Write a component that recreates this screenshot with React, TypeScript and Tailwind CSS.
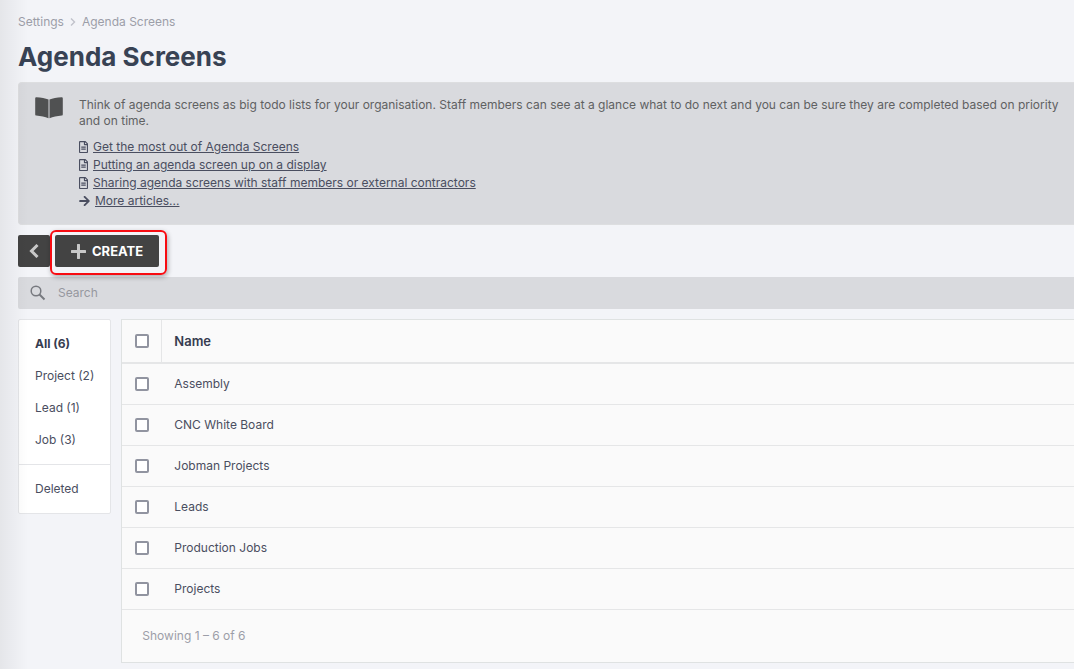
import { useState } from 'react';
import { FaArrowRight, FaRegFileAlt } from 'react-icons/fa';

const articles = [
  'Get the most out of Agenda Screens',
  'Putting an agenda screen up on a display',
  'Sharing agenda screens with staff members or external contractors',
];

const filters = ['All (6)', 'Project (2)', 'Lead (1)', 'Job (3)'];

const screens = ['Assembly', 'CNC White Board', 'Jobman Projects', 'Leads', 'Production Jobs', 'Projects'];

const checkbox =
  'block size-3.5 appearance-none rounded-xs border-2 border-[#9194a0] bg-white checked:bg-[#9194a0]';

function BookIcon() {
  return (
    <svg viewBox="0 0 28 22" className="h-[22px] w-7 shrink-0 fill-[#505152]" aria-hidden="true">
      <path d="M.2 1.400C.2.600.7.2 1.400.2 6 .4 10.500 1.200 13.500 2.600V21.300C10 20 6 19 1.200 18.600.6 18.500.2 18 .2 17.300Z" />
      <path d="M27.800 1.400C27.800.600 27.300.2 26.600.2 22 .4 17.500 1.200 14.500 2.600V21.300C18 20 22 19 26.800 18.600 27.400 18.500 27.800 18 27.800 17.300Z" />
    </svg>
  );
}

function HelpPanel() {
  return (
    <section className="flex gap-4 rounded-l-sm border border-r-0 border-[#dddee0] bg-[#d9dade] py-3.5 pl-4">
      <BookIcon />
      <div className="pr-3">
        <p className="text-[#606162]">
          Think of agenda screens as big todo lists for your organisation. Staff members can see at a glance what to do
          next and you can be sure they are completed based on priority and on time.
        </p>
        <ul className="mt-[9px] leading-[18px]">
          {articles.map((title) => (
            <li key={title} className="flex items-center gap-[5px]">
              <FaRegFileAlt className="h-3 w-[9px]" />
              <a href="#" className="underline">{title}</a>
            </li>
          ))}
          <li className="flex items-center gap-[5px]">
            <FaArrowRight className="h-3 w-[11px]" />
            <a href="#" className="underline">More articles...</a>
          </li>
        </ul>
      </div>
    </section>
  );
}

function FilterMenu() {
  const [active, setActive] = useState(filters[0]);

  const item = (label: string) => (
    <button
      key={label}
      onClick={() => setActive(label)}
      className={`block h-8 w-full px-4 text-left whitespace-nowrap ${active === label ? 'font-bold text-[#363c50]' : ''}`}
    >
      {label}
    </button>
  );

  return (
    <nav className="shrink-0 rounded-xs border border-[#e4e5e8] bg-white">
      <div className="border-b border-[#e4e5e8] py-2">{filters.map(item)}</div>
      <div className="py-2">{item('Deleted')}</div>
    </nav>
  );
}

export default function App() {
  const [selected, setSelected] = useState<string[]>([]);

  const toggle = (name: string) =>
    setSelected(selected.includes(name) ? selected.filter((s) => s !== name) : [...selected, name]);

  return (
    <main className="relative min-h-screen bg-[#f3f4f8] pt-3.5 pb-1.5 pl-[18px] font-['Inter',sans-serif] text-[12px] leading-4 text-[#4a4e60]">
      <div className="pointer-events-none absolute inset-y-0 left-0 w-7 bg-linear-to-r from-black/6 to-transparent" />

      <nav className="flex items-center gap-1.5 text-[#9c9ea8]">
        <a href="#">Settings</a>
        <svg viewBox="0 0 6 8" className="h-2 w-1.5 fill-none stroke-[#c0c2cb]" aria-hidden="true">
          <path d="M1 .5 4.500 4 1 7.500" strokeWidth="1.4" />
        </svg>
        <a href="#">Agenda Screens</a>
      </nav>

      <h1 className="mt-[11px] mb-[9px] text-[26px] leading-8 font-bold text-[#384254]">Agenda Screens</h1>

      <HelpPanel />

      <div className="mt-2.5 flex gap-[5px]">
        <button aria-label="Back" className="flex h-8 w-8 items-center justify-center rounded-xs bg-[#434343]">
          <svg viewBox="0 0 10 14" className="h-3.5 w-2.5 fill-none stroke-[#c8c8c8]" aria-hidden="true">
            <path d="M8.500 1 2.500 7 8.500 13" strokeWidth="3" />
          </svg>
        </button>
        <div className="relative">
          <button className="flex h-8 items-center gap-1.5 rounded-xs bg-[#434343] px-4 text-[13px] font-bold text-white">
            <svg viewBox="0 0 15 15" className="size-[15px] fill-none stroke-[#c8c8c8]" aria-hidden="true">
              <path d="M7.500 1V14M1 7.500H14" strokeWidth="3" strokeLinecap="round" />
            </svg>
            CREATE
          </button>
          <div className="pointer-events-none absolute -top-[5px] -right-2 -bottom-2 -left-[5px] rounded-md border-2 border-[#f80c12] shadow-[1px_2px_5px_rgba(0,0,0,0.3)]" />
        </div>
      </div>

      <label className="mt-2.5 flex h-8 items-center gap-3 rounded-l-xs bg-[#d9dade] pl-3">
        <svg viewBox="0 0 16 16" className="size-4 fill-none stroke-[#77797f]" aria-hidden="true">
          <circle cx="6" cy="6" r="4.800" strokeWidth="1.5" />
          <path d="M9.500 9.500 14.500 14.500" strokeWidth="1.900" />
        </svg>
        <input
          type="search"
          aria-label="Search"
          placeholder="Search"
          className="flex-1 bg-transparent outline-none placeholder:text-[#96989f]"
        />
      </label>

      <div className="mt-2.5 flex items-start gap-2.5">
        <FilterMenu />

        <div className="flex-1 border border-r-0 border-[#dfe2e2] bg-[#fafafa]">
          <table className="w-full border-separate border-spacing-0 text-left">
            <thead>
              <tr className="h-11">
                <th className="w-10 border-r border-b-2 border-[#e5e6e7] pl-[13px]">
                  <input
                    type="checkbox"
                    aria-label="Select all"
                    className={checkbox}
                    checked={selected.length === screens.length}
                    onChange={(e) => setSelected(e.target.checked ? screens : [])}
                  />
                </th>
                <th className="border-b-2 border-[#e5e6e7] pl-3 text-[13px] font-semibold text-[#363c50]">Name</th>
              </tr>
            </thead>
            <tbody>
              {screens.map((name) => (
                <tr key={name} className="h-[41px]">
                  <td className="border-b border-[#e5e6e7] pl-[13px]">
                    <input
                      type="checkbox"
                      aria-label={name}
                      className={checkbox}
                      checked={selected.includes(name)}
                      onChange={() => toggle(name)}
                    />
                  </td>
                  <td className="border-b border-[#e5e6e7] pl-3">{name}</td>
                </tr>
              ))}
            </tbody>
          </table>
          <p className="px-5 py-[18px] text-[#9c9ea8]">Showing 1 – 6 of 6</p>
        </div>
      </div>
    </main>
  );
}
